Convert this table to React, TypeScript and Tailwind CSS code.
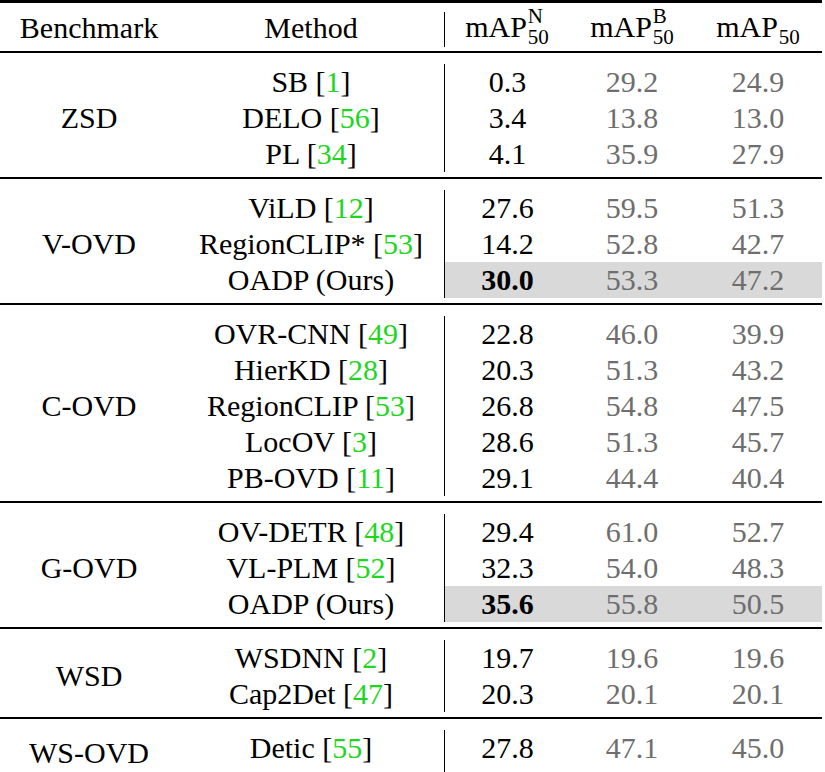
type Row = { method: string; cite?: string; vals: string[]; ours?: boolean };
type Group = { name: string; rows: Row[] };

const groups: Group[] = [
  {
    name: "ZSD",
    rows: [
      { method: "SB", cite: "1", vals: ["0.3", "29.2", "24.9"] },
      { method: "DELO", cite: "56", vals: ["3.4", "13.8", "13.0"] },
      { method: "PL", cite: "34", vals: ["4.1", "35.9", "27.9"] },
    ],
  },
  {
    name: "V-OVD",
    rows: [
      { method: "ViLD", cite: "12", vals: ["27.6", "59.5", "51.3"] },
      { method: "RegionCLIP*", cite: "53", vals: ["14.2", "52.8", "42.7"] },
      { method: "OADP (Ours)", vals: ["30.0", "53.3", "47.2"], ours: true },
    ],
  },
  {
    name: "C-OVD",
    rows: [
      { method: "OVR-CNN", cite: "49", vals: ["22.8", "46.0", "39.9"] },
      { method: "HierKD", cite: "28", vals: ["20.3", "51.3", "43.2"] },
      { method: "RegionCLIP", cite: "53", vals: ["26.8", "54.8", "47.5"] },
      { method: "LocOV", cite: "3", vals: ["28.6", "51.3", "45.7"] },
      { method: "PB-OVD", cite: "11", vals: ["29.1", "44.4", "40.4"] },
    ],
  },
  {
    name: "G-OVD",
    rows: [
      { method: "OV-DETR", cite: "48", vals: ["29.4", "61.0", "52.7"] },
      { method: "VL-PLM", cite: "52", vals: ["32.3", "54.0", "48.3"] },
      { method: "OADP (Ours)", vals: ["35.6", "55.8", "50.5"], ours: true },
    ],
  },
  {
    name: "WSD",
    rows: [
      { method: "WSDNN", cite: "2", vals: ["19.7", "19.6", "19.6"] },
      { method: "Cap2Det", cite: "47", vals: ["20.3", "20.1", "20.1"] },
    ],
  },
  {
    name: "WS-OVD",
    rows: [{ method: "Detic", cite: "55", vals: ["27.8", "47.1", "45.0"] }],
  },
];

// mAP with stacked super/subscript, like $\mathrm{mAP}^{N}_{50}$
const MAP = ({ sup }: { sup?: string }) => (
  <span className="inline-flex items-center">
    <span className="leading-[36px]">mAP</span>
    <span className="flex flex-col text-[21px] leading-[21px] ml-px">
      <span className="h-[21px]">{sup ?? "\u00a0"}</span>
      <span>50</span>
    </span>
  </span>
);

export default function App() {
  return (
    <div className="w-[825px] h-[772px] bg-white text-black font-['Liberation_Serif'] text-[30px]">
      <div className="w-[822px]">
        <div className="h-[3px] bg-black" />

        {/* header */}
        <div className="grid grid-cols-[178px_266px_126px_124px_128px] h-[48px]">
          <div className="flex items-center justify-center">Benchmark</div>
          <div className="flex items-center justify-center">Method</div>
          <div className="relative flex items-center justify-center">
            <div className="absolute left-0 top-[9px] bottom-[4px] w-px bg-black" />
            <MAP sup="N" />
          </div>
          <div className="flex items-center justify-center">
            <MAP sup="B" />
          </div>
          <div className="flex items-center justify-center">
            <MAP />
          </div>
        </div>
        <div className="h-[1.5px] bg-black" />

        {groups.map((g, gi) => (
          <div key={g.name}>
            <div className="grid grid-cols-[178px_266px_378px] pt-[11px] pb-[5px]">
              <div className="flex items-center justify-center">{g.name}</div>
              <div>
                {g.rows.map((r) => (
                  <div key={r.method + r.vals[0]} className="h-[36px] leading-[36px] text-center">
                    {r.method}
                    {r.cite && (
                      <>
                        {" "}[<span className="text-[#1ed61e]">{r.cite}</span>]
                      </>
                    )}
                  </div>
                ))}
              </div>
              <div className="border-l border-black">
                {g.rows.map((r) => (
                  <div
                    key={r.vals.join()}
                    className={`grid grid-cols-[125px_124px_128px] h-[36px] leading-[36px] text-center ${
                      r.ours ? "bg-[#d9d9d9]" : ""
                    }`}
                  >
                    <div className={r.ours ? "font-bold" : ""}>{r.vals[0]}</div>
                    <div className="text-[#6e6e6e]">{r.vals[1]}</div>
                    <div className="text-[#6e6e6e]">{r.vals[2]}</div>
                  </div>
                ))}
              </div>
            </div>
            <div className={gi === groups.length - 1 ? "h-[3px] bg-black" : "h-[2px] bg-black"} />
          </div>
        ))}
      </div>
    </div>
  );
}
